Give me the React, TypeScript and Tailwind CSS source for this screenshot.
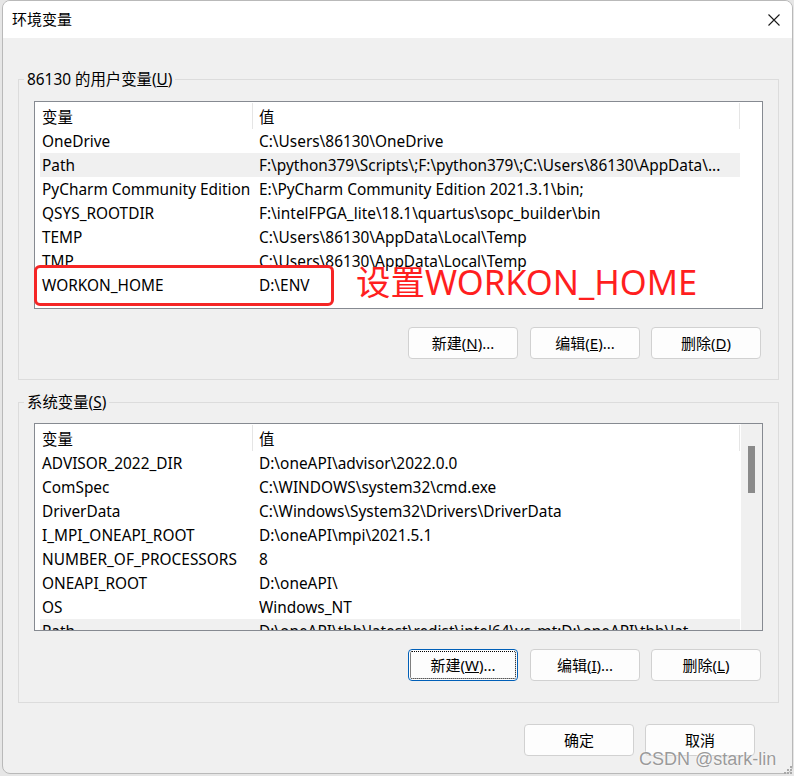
import React from 'react';

const userVars: [string, string][] = [
  ['OneDrive', 'C:\\Users\\86130\\OneDrive'],
  ['Path', 'F:\\python379\\Scripts\\;F:\\python379\\;C:\\Users\\86130\\AppData\\...'],
  ['PyCharm Community Edition', 'E:\\PyCharm Community Edition 2021.3.1\\bin;'],
  ['QSYS_ROOTDIR', 'F:\\intelFPGA_lite\\18.1\\quartus\\sopc_builder\\bin'],
  ['TEMP', 'C:\\Users\\86130\\AppData\\Local\\Temp'],
  ['TMP', 'C:\\Users\\86130\\AppData\\Local\\Temp'],
  ['WORKON_HOME', 'D:\\ENV'],
];

const sysVars: [string, string][] = [
  ['ADVISOR_2022_DIR', 'D:\\oneAPI\\advisor\\2022.0.0'],
  ['ComSpec', 'C:\\WINDOWS\\system32\\cmd.exe'],
  ['DriverData', 'C:\\Windows\\System32\\Drivers\\DriverData'],
  ['I_MPI_ONEAPI_ROOT', 'D:\\oneAPI\\mpi\\2021.5.1'],
  ['NUMBER_OF_PROCESSORS', '8'],
  ['ONEAPI_ROOT', 'D:\\oneAPI\\'],
  ['OS', 'Windows_NT'],
  ['Path', 'D:\\oneAPI\\tbb\\latest\\redist\\intel64\\vc_mt;D:\\oneAPI\\tbb\\lat...'],
];

const VarList = ({ rows, highlight, scrollbar }: { rows: [string, string][]; highlight: number; scrollbar?: boolean }) => {
  return (
    <div className="flex h-[208px] border border-[#868a91] bg-white overflow-hidden text-[15.4px]">
      <div className="flex-1 min-w-0 flex flex-col">
        <div className="flex h-[27px] shrink-0 ml-[5px] w-[700px]">
          <div className="w-[212px] pl-[2px] pt-[5px] leading-[22px]">变量</div>
          <div className="w-px h-[26px] mt-px bg-[#e5e5e5]" />
          <div className="flex-1 pl-[6px] pt-[5px] leading-[22px]">值</div>
          <div className="w-px h-[26px] mt-px bg-[#e5e5e5]" />
        </div>
        {rows.map(([name, value], i) => (
          <div
            key={name + i}
            className={
              'flex h-[24px] shrink-0 ml-[5px] w-[700px] pt-px leading-[24px] whitespace-nowrap ' +
              (i === highlight ? 'bg-[#f0f0f0]' : '')
            }
          >
            <div className="w-[219px] pl-[2px] shrink-0">{name}</div>
            <div className="flex-1 overflow-hidden">{value}</div>
          </div>
        ))}
      </div>
      {scrollbar && (
        <div className="w-[21px] shrink-0 bg-[#f0f0f0] pt-[22px] pl-[7px]">
          <div className="w-[7px] h-[47px] bg-[#8a8a8a]" />
        </div>
      )}
    </div>
  );
};

const Btn = ({ children, focused, className = '' }: { children: React.ReactNode; focused?: boolean; className?: string }) => {
  return (
    <div
      className={
        'w-[110px] h-[32px] rounded-[4px] border flex items-center justify-center text-[15px] bg-[#fdfdfd] ' +
        (focused
          ? 'border-[#005fb8] outline-1 outline-dotted outline-black outline-offset-[-3px] '
          : 'border-[#d1d1d1] ') +
        className
      }
    >
      {children}
    </div>
  );
};

const GroupBox = ({ label, children, className = '' }: { label: React.ReactNode; children: React.ReactNode; className?: string }) => {
  return (
    <div className={'relative w-[761px] h-[301px] border border-[#dcdcdc] px-[15px] ' + className}>
      <div className="absolute -top-[10px] left-[5px] px-[3px] bg-[#f0f0f0] leading-[20px] text-[15.4px]">{label}</div>
      {children}
    </div>
  );
};

export default function App() {
  return (
    <div className="relative w-[794px] h-[776px] bg-[#e6e6e6] overflow-hidden text-black font-['Noto_Sans','Noto_Sans_CJK_SC',sans-serif] text-[15px]">
      <div className="ml-[2px] w-[791px] h-[774px] border border-[#b9b9b9] rounded-[8px] overflow-hidden flex flex-col bg-[#f0f0f0]">
        <div className="h-[37px] shrink-0 bg-white flex items-center justify-between pl-[9px] pr-[12px]">
          <span className="text-[15px]">环境变量</span>
          <svg width="12" height="12" viewBox="0 0 12 12" className="mt-px">
            <path d="M0.5 0.5 L11.5 11.5 M11.5 0.5 L0.5 11.5" stroke="#1a1a1a" strokeWidth="1.1" fill="none" />
          </svg>
        </div>

        <div className="flex flex-col pl-[15px] pt-[41px]">
          <GroupBox label={<>86130 的用户变量(<u>U</u>)</>} className="pt-[21px]">
            <VarList rows={userVars} highlight={1} />
            <div className="flex justify-end mt-[18px] mr-[2px]">
              <Btn>新建(<u>N</u>)...</Btn>
              <Btn className="ml-[12px]">编辑(<u>E</u>)...</Btn>
              <Btn className="ml-[11px]">删除(<u>D</u>)</Btn>
            </div>
          </GroupBox>

          <GroupBox label={<>系统变量(<u>S</u>)</>} className="mt-[22px] pt-[20px]">
            <VarList rows={sysVars} highlight={7} scrollbar />
            <div className="flex justify-end mt-[18px] mr-[2px]">
              <Btn focused>新建(<u>W</u>)...</Btn>
              <Btn className="ml-[12px]">编辑(<u>I</u>)...</Btn>
              <Btn className="ml-[11px]">删除(<u>L</u>)</Btn>
            </div>
          </GroupBox>

          <div className="w-[761px] flex justify-end pr-[24px] mt-[21px]">
            <Btn>确定</Btn>
            <Btn className="ml-[11px]">取消</Btn>
          </div>
        </div>
      </div>

      {/* annotation */}
      <div className="absolute left-[34px] top-[265px] w-[300px] h-[41px] border-[3px] border-[#f52525] rounded-[6px]" />
      <div className="absolute left-[356px] top-[265px] text-[34.5px] leading-[34px] text-[#ff1f1f] whitespace-nowrap">
        设置WORKON_HOME
      </div>

      {/* watermark */}
      <div className="absolute left-[639px] top-[748px] text-[18px] leading-[22px] text-[#9a9a9a] font-['Liberation_Sans',sans-serif] [text-shadow:0_0_2px_#fff,0_0_1px_#fff]">
        CSDN @stark-lin
      </div>
      <svg className="absolute right-[1px] bottom-[1px]" width="10" height="10" viewBox="0 0 10 10">
        <rect x="7" y="1" width="2" height="2" fill="#a8a8a8" />
        <rect x="4" y="4" width="2" height="2" fill="#a8a8a8" />
        <rect x="7" y="4" width="2" height="2" fill="#a8a8a8" />
        <rect x="1" y="7" width="2" height="2" fill="#a8a8a8" />
        <rect x="4" y="7" width="2" height="2" fill="#a8a8a8" />
        <rect x="7" y="7" width="2" height="2" fill="#a8a8a8" />
      </svg>
    </div>
  );
}
